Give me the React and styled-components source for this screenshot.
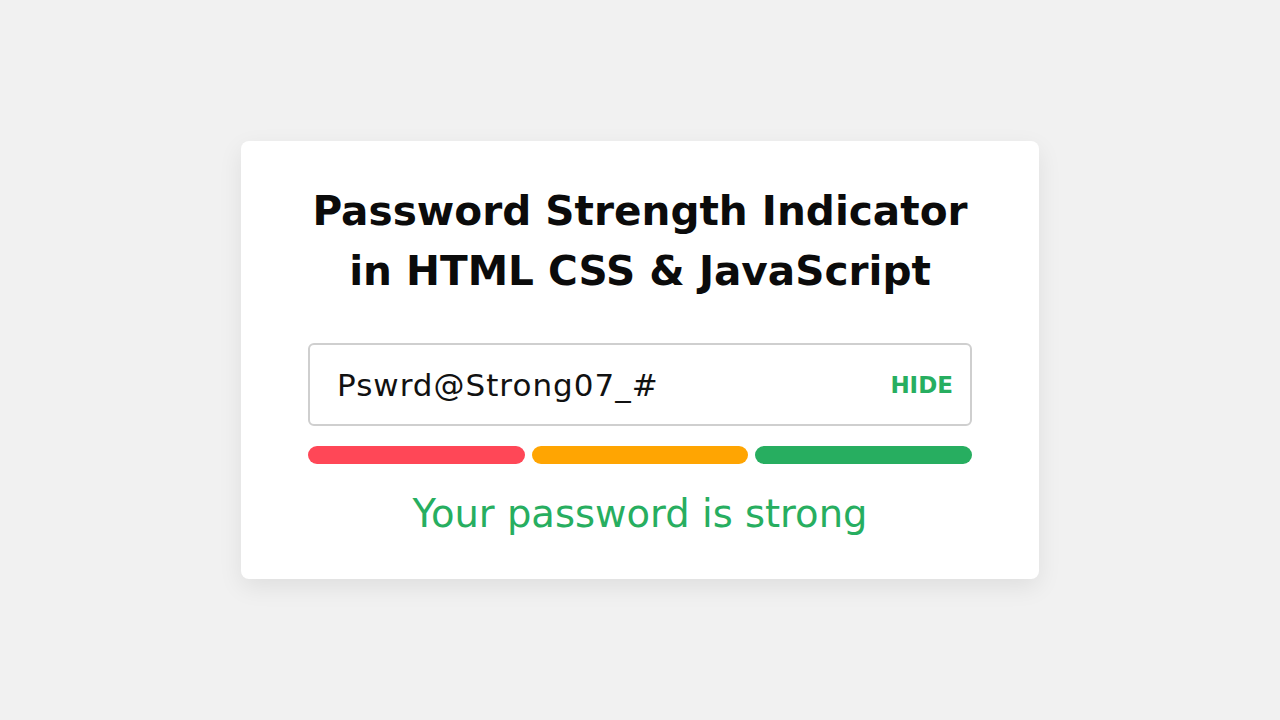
import React, { useState } from "react";
import styled, { createGlobalStyle } from "styled-components";

const colors = {
    weak: "#ff4757",
    medium: "#ffa502",
    strong: "#27ae60",
    page: "#f1f1f1",
    border: "#cfcfcf"
};

const GlobalStyle = createGlobalStyle`
    * {
        box-sizing: border-box;
    }
    html, body {
        margin: 0;
        padding: 0;
    }
    body {
        background: ${colors.page};
        font-family: "DejaVu Sans", "Noto Sans", sans-serif;
    }
`;

const levels = [colors.weak, colors.medium, colors.strong];

const App = () => {
    const [password, setPassword] = useState("Pswrd@Strong07_#");
    const [visible, setVisible] = useState(true);

    return (
        <Page>
            <GlobalStyle />
            <Card>
                <Title>
                    Password Strength Indicator
                    <br />
                    in HTML CSS &amp; JavaScript
                </Title>
                <Field>
                    <Input
                        type={visible ? "text" : "password"}
                        value={password}
                        onChange={(e) => setPassword(e.target.value)}
                    />
                    <Toggle onClick={() => setVisible(!visible)}>
                        {visible ? "HIDE" : "SHOW"}
                    </Toggle>
                </Field>
                <Bars>
                    {levels.map((color, index) => (
                        <Bar key={index} $color={color} />
                    ))}
                </Bars>
                <Status>Your password is strong</Status>
            </Card>
        </Page>
    );
};

const Page = styled.div`
    min-height: 720px;
    display: flex;
    align-items: center;
    justify-content: center;
`;

const Card = styled.div`
    width: 798px;
    height: 438px;
    background: #fff;
    border-radius: 8px;
    padding: 40px 67px 0;
    box-shadow: 0 8px 24px rgba(0, 0, 0, 0.08);
    display: flex;
    flex-direction: column;
`;

const Title = styled.h1`
    margin: 0 0 42px;
    text-align: center;
    font-size: 40.6px;
    line-height: 60px;
    font-weight: 700;
    color: #0b0b0b;
`;

const Field = styled.div`
    height: 83px;
    display: flex;
    align-items: center;
    border: 2px solid ${colors.border};
    border-radius: 6px;
    padding: 0 17px 0 27px;
`;

const Input = styled.input`
    flex: 1;
    min-width: 0;
    border: none;
    outline: none;
    background: transparent;
    font-family: inherit;
    font-size: 31px;
    letter-spacing: 1px;
    color: #111;
    padding: 0;
`;

const Toggle = styled.button`
    border: none;
    background: none;
    padding: 0;
    cursor: pointer;
    font-family: inherit;
    font-size: 23px;
    font-weight: 700;
    color: ${colors.strong};
`;

const Bars = styled.div`
    margin-top: 20px;
    display: grid;
    grid-template-columns: repeat(3, 1fr);
    gap: 7px;
`;

const Bar = styled.div`
    height: 18px;
    border-radius: 9px;
    background: ${(p) => p.$color};
`;

const Status = styled.p`
    margin: 22px 0 0;
    text-align: center;
    font-size: 38.5px;
    line-height: 56px;
    color: ${colors.strong};
`;

export default App;
